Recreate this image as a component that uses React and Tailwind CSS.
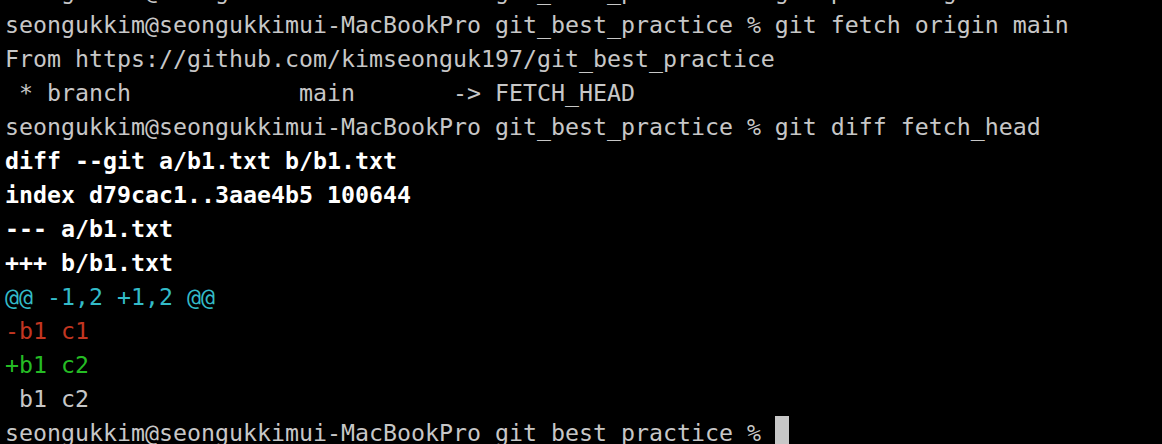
import React from 'react';

const prompt = 'seongukkim@seongukkimui-MacBookPro git_best_practice % ';

const lines = [
  { text: prompt + 'git pull origin main', cls: 'text-[#c7c7c7]' },
  { text: prompt + 'git fetch origin main', cls: 'text-[#c7c7c7]' },
  { text: 'From https://github.com/kimseonguk197/git_best_practice', cls: 'text-[#c7c7c7]' },
  { text: ' * branch            main       -> FETCH_HEAD', cls: 'text-[#c7c7c7]' },
  { text: prompt + 'git diff fetch_head', cls: 'text-[#c7c7c7]' },
  { text: 'diff --git a/b1.txt b/b1.txt', cls: 'text-white font-bold' },
  { text: 'index d79cac1..3aae4b5 100644', cls: 'text-white font-bold' },
  { text: '--- a/b1.txt', cls: 'text-white font-bold' },
  { text: '+++ b/b1.txt', cls: 'text-white font-bold' },
  { text: '@@ -1,2 +1,2 @@', cls: 'text-[#33bbc8]' },
  { text: '-b1 c1', cls: 'text-[#c23621]' },
  { text: '+b1 c2', cls: 'text-[#25bc24]' },
  { text: ' b1 c2', cls: 'text-[#c7c7c7]' },
];

export default function App() {
  return (
    <div className="w-[1162px] h-[444px] overflow-hidden bg-black">
      <div className="-mt-[26px] px-[5px] font-['DejaVu_Sans_Mono',monospace] text-[23.25px] leading-[34px] whitespace-pre">
        {lines.map((line, i) => (
          <div key={i} className={line.cls}>
            {line.text}
          </div>
        ))}
        <div className="flex items-start text-[#c7c7c7]">
          <span>{prompt}</span>
          <span className="w-[14px] h-[34px] bg-[#c7c7c7]" />
        </div>
      </div>
    </div>
  );
}
